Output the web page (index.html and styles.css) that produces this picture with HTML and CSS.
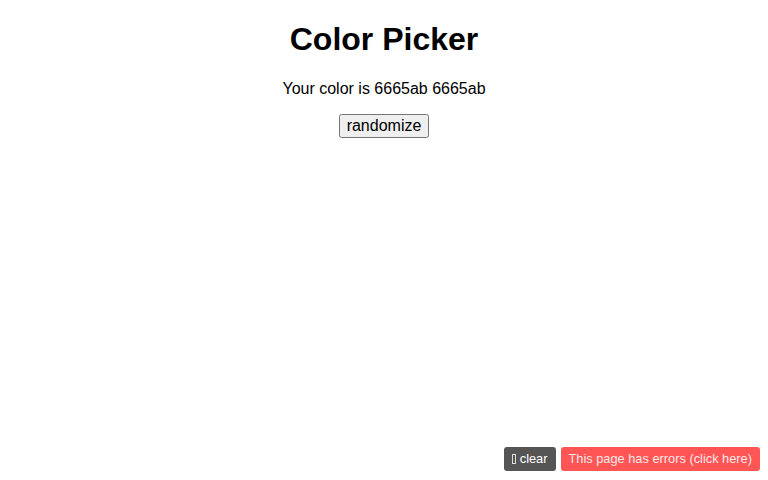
FILE: index.html
```html
<!DOCTYPE html>
<html lang="en">
<head>
    <meta charset="UTF-8">
    <meta name="viewport" content="width=device-width, initial-scale=1.0">
    <title>Color Picker</title>
    <link rel="stylesheet" href="styles.css">
</head>
<body>
    <div class="app">
        <h1>Color Picker</h1>
        <p>Your color is 6665ab 6665ab</p>
        <button class="randomize">randomize</button>
    </div>

    <!-- error overlay -->
    <div class="error-bar">
        <span class="clear-btn"><span class="icon-missing"></span> clear</span>
        <span class="error-btn">This page has errors (click here)</span>
    </div>
</body>
</html>
```

FILE: styles.css
```css
body {
    margin: 0 8px;
    font-family: 'Liberation Sans', Arial, sans-serif;
    color: #000;
    background: #fff;
}

.app {
    text-align: center;
}

h1 {
    font-size: 32px;
    margin: 21px 0 22px;
}

p {
    font-size: 16px;
    margin: 16px 0;
}

.randomize {
    font-family: 'Liberation Sans', Arial, sans-serif;
    font-size: 16px;
    padding: 1px 6px;
}

/* Error overlay */
.error-bar {
    position: fixed;
    right: 8px;
    bottom: 9px;
    display: flex;
    gap: 5px;
    font-size: 12.8px;
}

.clear-btn,
.error-btn {
    color: #fff;
    padding: 4px 8px;
    border-radius: 3px;
    line-height: 16px;
}

.clear-btn {
    background: #555;
}

.icon-missing {
    display: inline-block;
    width: 2px;
    height: 8px;
    border: 1px solid #ddd;
    vertical-align: -1px;
}

.error-btn {
    background: #f55;
    color: #fde8e8;
}
```
